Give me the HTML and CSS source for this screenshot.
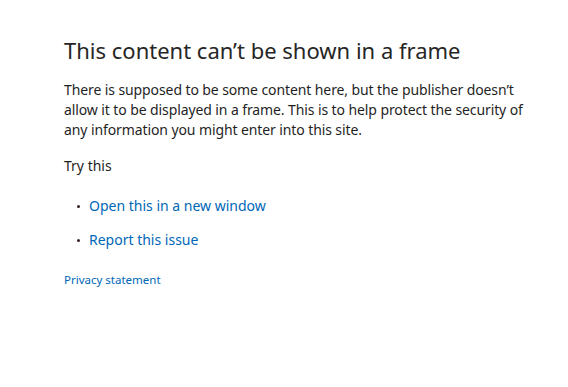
FILE: index.html
```html
<!DOCTYPE html>
<html lang="en">
<head>
  <meta charset="UTF-8">
  <title>This content can't be shown in a frame</title>
  <link rel="stylesheet" href="styles.css">
</head>
<body>
<div class="main">
  <h1 class="title">This content can’t be shown in a frame</h1>
  <p class="desc">
    There is supposed to be some content here, but the publisher doesn’t
    allow it to be displayed in a frame. This is to help protect the security of
    any information you might enter into this site.
  </p>
  <p class="try">Try this</p>
  <ul class="actions">
    <li><a href="#">Open this in a new window</a></li>
    <li><a href="#">Report this issue</a></li>
  </ul>
  <a class="privacy" href="#">Privacy statement</a>
</div>
</body>
</html>
```

FILE: styles.css
```css
body {
  margin: 0;
  background: #fff;
  color: #1f1f1f;
  font-family: "Noto Sans", "Open Sans", sans-serif;
}

.main {
  padding: 34px 20px 0 64px;
}

.title {
  margin: 0 0 14px;
  font-size: 22px;
  font-weight: 400;
  line-height: 32px;
  color: #262626;
}

.desc {
  margin: 0 0 16px;
  font-size: 14px;
  line-height: 20px;
  max-width: 480px;
  letter-spacing: -0.1px;
}

.try {
  margin: 0 0 20px;
  font-size: 14px;
  line-height: 20px;
}

.actions {
  margin: 0 0 17px;
  padding: 0;
  list-style: none;
  font-size: 14px;
  line-height: 20px;
}

.actions li {
  display: flex;
  align-items: center;
  gap: 9px;
  padding-left: 13px;
  margin-bottom: 14px;
}

.actions li::before {
  content: "";
  width: 3px;
  height: 3px;
  border-radius: 50%;
  background: #3a1f1f;
  flex: none;
}

a {
  color: #0067b8;
  text-decoration: none;
}

.privacy {
  font-size: 11.5px;
}
```
